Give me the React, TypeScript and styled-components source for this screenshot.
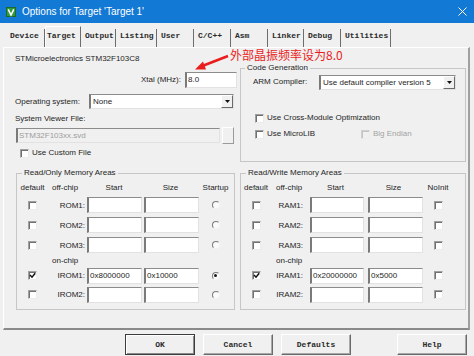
import React from "react";
import styled, { createGlobalStyle } from "styled-components";

const GlobalStyle = createGlobalStyle`
  html, body {
    margin: 0;
    padding: 0;
    background: #f0f0f0;
  }

  body {
    font-family: "Liberation Sans", Arial, sans-serif;
    font-size: 8px;
    color: #1e1e1e;
  }

  * {
    box-sizing: border-box;
  }
`;

const Dialog = styled.div`
  position: relative;
  width: 474px;
  height: 356px;
  overflow: hidden;

  display: flex;
  flex-direction: column;

  background: #f0f0f0;
`;

const TitleBar = styled.div`
  height: 23px;
  flex: none;

  display: flex;
  align-items: center;
  padding: 0 7px 0 6px;

  background: #1279d4;
  color: #fff;
`;

const Title = styled.span`
  margin-left: 6px;

  font-size: 10px;
  line-height: 12px;
`;

const CloseIcon = styled.svg`
  margin-left: auto;
`;

const TabBar = styled.div`
  height: 24px;
  flex: none;

  display: flex;
  align-items: flex-end;
  padding-left: 6px;

  font-family: "Liberation Mono", "Courier New", monospace;
  font-size: 8px;
  font-weight: bold;
  color: #2a2a2a;
`;

const Tab = styled.div<{ $w: number; $active?: boolean }>`
  width: ${({ $w }) => $w}px;
  height: ${({ $active }) => ($active ? 21 : 18)}px;
  padding: ${({ $active }) => ($active ? "3px 0 0 1px" : "1px 0 0 4px")};

  line-height: 12px;
  white-space: nowrap;

  border-top: ${({ $active }) => ($active ? "1px solid #fff" : "none")};
  border-left: ${({ $active }) => ($active ? "1px solid #fff" : "none")};
  border-right: 1px solid #6d6d6d;
`;

const Panel = styled.div`
  width: 467px;
  height: 283px;
  flex: none;
  margin-left: 3px;
  padding: 0 2px 0 11px;

  display: flex;
  flex-direction: column;

  border-top: 1px solid #fff;
  border-left: 1px solid #fff;
  border-right: 2px solid #a0a0a0;
  border-bottom: 2px solid #8a8a8a;
`;

const TopSection = styled.div`
  display: grid;
  grid-template-columns: 222px 226px;
  column-gap: 3px;
`;

const Column = styled.div`
  display: flex;
  flex-direction: column;
`;

const TextLine = styled.div<{ $top: number; $indent?: number }>`
  margin-top: ${({ $top }) => $top}px;
  padding-left: ${({ $indent }) => $indent ?? 0}px;

  line-height: 12px;
  white-space: nowrap;
`;

const Row = styled.div<{ $top: number; $h: number; $indent?: number; $end?: boolean }>`
  height: ${({ $h }) => $h}px;
  margin-top: ${({ $top }) => $top}px;
  padding-left: ${({ $indent }) => $indent ?? 0}px;

  display: flex;
  align-items: center;
  justify-content: ${({ $end }) => ($end ? "flex-end" : "flex-start")};

  white-space: nowrap;
`;

const Label = styled.span<{ $w?: number; $muted?: boolean }>`
  width: ${({ $w }) => ($w ? `${$w}px` : "auto")};
  flex: none;

  color: ${({ $muted }) => ($muted ? "#a3a3a3" : "inherit")};
  line-height: 12px;
`;

const Field = styled.div<{ $w: number; $h?: number; $disabled?: boolean; $gap?: number }>`
  width: ${({ $w }) => $w}px;
  height: ${({ $h }) => $h ?? 16}px;
  flex: none;
  margin-left: ${({ $gap }) => $gap ?? 0}px;
  padding-left: 1px;

  display: flex;
  align-items: center;

  background: ${({ $disabled }) => ($disabled ? "#f0f0f0" : "#fff")};
  color: ${({ $disabled }) => ($disabled ? "#9c9c9c" : "#1e1e1e")};

  border-top: 1px solid #8c8c8c;
  border-left: 2px solid #7a7a7a;
  border-right: 1px solid #e2e2e2;
  border-bottom: 1px solid #e2e2e2;

  line-height: 12px;
  white-space: nowrap;
  overflow: hidden;
`;

const Select = styled.div<{ $w: number; $gap?: number }>`
  width: ${({ $w }) => $w}px;
  height: 15px;
  flex: none;
  margin-left: ${({ $gap }) => $gap ?? 0}px;
  padding-left: 2px;

  display: flex;
  align-items: center;

  background: #fff;

  border-top: 1px solid #8c8c8c;
  border-left: 2px solid #7a7a7a;
  border-right: 1px solid #e2e2e2;
  border-bottom: 1px solid #e2e2e2;

  white-space: nowrap;
`;

const DropButton = styled.span`
  width: 12px;
  height: 100%;
  margin-left: auto;

  display: flex;
  align-items: center;
  justify-content: center;

  background: #f0f0f0;

  border-top: 1px solid #fff;
  border-left: 1px solid #fff;
  border-right: 1px solid #6a6a6a;
  border-bottom: 1px solid #6a6a6a;
`;

const BrowseButton = styled.span`
  width: 12px;
  height: 17px;
  flex: none;
  margin-left: 2px;

  background: #f0f0f0;

  border-top: 1px solid #fff;
  border-left: 1px solid #fff;
  border-right: 1px solid #9a9a9a;
  border-bottom: 1px solid #9a9a9a;
`;

const CheckBox = styled.span<{ $disabled?: boolean }>`
  width: 9px;
  height: 9px;
  flex: none;

  display: inline-flex;
  align-items: center;
  justify-content: center;

  background: ${({ $disabled }) => ($disabled ? "#f0f0f0" : "#fff")};

  border-top: 1px solid ${({ $disabled }) => ($disabled ? "#cfcfcf" : "#a0a0a0")};
  border-left: 1px solid ${({ $disabled }) => ($disabled ? "#cfcfcf" : "#a0a0a0")};
  border-right: 1px solid #ececec;
  border-bottom: 1px solid #ececec;
  box-shadow: inset 1px 1px 0 ${({ $disabled }) => ($disabled ? "#c4c4c4" : "#707070")};
`;

const Radio = styled.span`
  width: 8px;
  height: 8px;
  flex: none;

  display: inline-flex;
  align-items: center;
  justify-content: center;

  border-radius: 50%;
  border: 1px solid;
  border-color: #7a7a7a #f4f4f4 #f4f4f4 #7a7a7a;
  background: #fbfbfb;
`;

const RadioDot = styled.span`
  width: 3px;
  height: 3px;

  border-radius: 50%;
  background: #1a1a1a;
`;

const CheckText = styled.span<{ $muted?: boolean }>`
  margin-left: 3px;

  color: ${({ $muted }) => ($muted ? "#a3a3a3" : "inherit")};
  line-height: 12px;
`;

const Option = styled.span<{ $w?: number }>`
  width: ${({ $w }) => ($w ? `${$w}px` : "auto")};
  flex: none;

  display: flex;
  align-items: center;
`;

const Group = styled.fieldset<{ $w: number; $bottom: number; $top?: number }>`
  width: ${({ $w }) => $w}px;
  min-width: 0;
  margin: ${({ $top }) => $top ?? 0}px 0 0 0;
  padding: 0 0 ${({ $bottom }) => $bottom}px 0;

  border: 1px solid #c6c6c6;
`;

const Legend = styled.legend<{ $offset: number }>`
  margin-left: ${({ $offset }) => $offset}px;
  padding: 0 2px;

  font-size: 8px;
  line-height: 10px;
`;

const MemorySection = styled.div`
  margin-top: 6px;
  padding-left: 1px;

  display: flex;
  gap: 5px;
`;

const MemGrid = styled.div<{ $cols: string }>`
  margin-top: 1px;

  display: grid;
  grid-template-columns: ${({ $cols }) => $cols};
  grid-template-rows: 16px 20px 20px 20px 11px 19px 19px;
  align-items: center;

  white-space: nowrap;
`;

const Cell = styled.div<{ $justify?: string; $pl?: number; $pr?: number }>`
  display: flex;
  align-items: center;
  justify-content: ${({ $justify }) => $justify ?? "center"};
  padding-left: ${({ $pl }) => $pl ?? 0}px;
  padding-right: ${({ $pr }) => $pr ?? 0}px;

  line-height: 11px;
`;

const ButtonRow = styled.div`
  flex: none;
  padding: 4px 0 0 125px;

  display: flex;
  gap: 8px;
`;

const DialogButton = styled.button<{ $default?: boolean; $push?: number }>`
  width: 70px;
  height: 21px;
  margin: 0 0 0 ${({ $push }) => $push ?? 0}px;
  padding: 0;

  font-family: "Liberation Mono", "Courier New", monospace;
  font-size: 8px;
  font-weight: bold;
  color: #2a2a2a;

  background: #f0f0f0;

  border: 1px solid;
  border-color: ${({ $default }) =>
    $default ? "#3c3c3c" : "#fff #6a6a6a #6a6a6a #fff"};
  box-shadow: ${({ $default }) =>
    $default
      ? "inset 1px 1px 0 #fff, inset -1px -1px 0 #8a8a8a"
      : "inset -1px -1px 0 #a8a8a8"};
`;

const Annotation = styled.div`
  position: absolute;
  left: 186px;
  top: 46px;

  display: flex;
  align-items: flex-start;
  pointer-events: none;
`;

const AnnotationText = styled.span`
  margin: 2px 0 0 0;

  font-family: "Noto Sans CJK SC", "Liberation Sans", sans-serif;
  font-size: 12px;
  line-height: 14px;
  color: #ea1d1d;
  white-space: nowrap;
`;

type MemRow = {
  name: string;
  start: string;
  size: string;
  def: boolean;
  last: boolean;
};

const TABS = [
  { name: "Device", w: 39 },
  { name: "Target", w: 36, active: true },
  { name: "Output", w: 35 },
  { name: "Listing", w: 41 },
  { name: "User", w: 37 },
  { name: "C/C++", w: 37 },
  { name: "Asm", w: 37 },
  { name: "Linker", w: 36 },
  { name: "Debug", w: 37 },
  { name: "Utilities", w: 50 },
];

const ROM_OFF: MemRow[] = [
  { name: "ROM1:", start: "", size: "", def: false, last: false },
  { name: "ROM2:", start: "", size: "", def: false, last: false },
  { name: "ROM3:", start: "", size: "", def: false, last: false },
];

const ROM_ON: MemRow[] = [
  { name: "IROM1:", start: "0x8000000", size: "0x10000", def: true, last: true },
  { name: "IROM2:", start: "", size: "", def: false, last: false },
];

const RAM_OFF: MemRow[] = [
  { name: "RAM1:", start: "", size: "", def: false, last: false },
  { name: "RAM2:", start: "", size: "", def: false, last: false },
  { name: "RAM3:", start: "", size: "", def: false, last: false },
];

const RAM_ON: MemRow[] = [
  { name: "IRAM1:", start: "0x20000000", size: "0x5000", def: true, last: false },
  { name: "IRAM2:", start: "", size: "", def: false, last: false },
];

function Check({ checked, disabled }: { checked?: boolean; disabled?: boolean }) {
  return (
    <CheckBox $disabled={disabled}>
      {checked && (
        <svg width="7" height="7" viewBox="0 0 7 7">
          <path d="M1 3 L3 5.2 L6.2 1.2" stroke="#111" strokeWidth="1.5" fill="none" />
        </svg>
      )}
    </CheckBox>
  );
}

function DropArrow() {
  return (
    <DropButton>
      <svg width="5" height="3" viewBox="0 0 5 3">
        <polygon points="0,0 5,0 2.5,3" fill="#111" />
      </svg>
    </DropButton>
  );
}

type GroupProps = {
  title: string;
  width: number;
  cols: string;
  startW: number;
  sizeW: number;
  namePad: number;
  offPad: number;
  lastHeader: string;
  lastKind: "radio" | "check";
  off: MemRow[];
  on: MemRow[];
};

function MemoryGroup(props: GroupProps) {
  const { title, width, cols, startW, sizeW, namePad, offPad, lastHeader, lastKind, off, on } = props;

  const renderRow = (r: MemRow) => (
    <React.Fragment key={r.name}>
      <Cell>
        <Check checked={r.def} />
      </Cell>
      <Cell $justify="flex-end" $pr={namePad}>
        {r.name}
      </Cell>
      <Cell $justify="flex-end">
        <Field $w={startW}>{r.start}</Field>
      </Cell>
      <Cell $justify="flex-end">
        <Field $w={sizeW}>{r.size}</Field>
      </Cell>
      <Cell>
        {lastKind === "radio" ? <Radio>{r.last && <RadioDot />}</Radio> : <Check checked={r.last} />}
      </Cell>
    </React.Fragment>
  );

  return (
    <Group $w={width} $bottom={5}>
      <Legend $offset={5}>{title}</Legend>
      <MemGrid $cols={cols}>
        <Cell>default</Cell>
        <Cell $justify="flex-start" $pl={offPad}>
          off-chip
        </Cell>
        <Cell>Start</Cell>
        <Cell>Size</Cell>
        <Cell>{lastHeader}</Cell>
        {off.map(renderRow)}
        <Cell />
        <Cell $justify="flex-start" $pl={offPad}>
          on-chip
        </Cell>
        <Cell />
        <Cell />
        <Cell />
        {on.map(renderRow)}
      </MemGrid>
    </Group>
  );
}

export default function App() {
  return (
    <>
      <GlobalStyle />
      <Dialog>
        <TitleBar>
          <svg width="10" height="10" viewBox="0 0 10 10">
            <rect width="10" height="10" fill="#2f9a3e" />
            <rect x="0.5" y="0.5" width="9" height="9" fill="none" stroke="#1c6b2a" />
            <path d="M2.2 2.4 L5 8 L7.8 2.4" stroke="#fff" strokeWidth="1.6" fill="none" />
          </svg>
          <Title>Options for Target 'Target 1'</Title>
          <CloseIcon width="9" height="9" viewBox="0 0 9 9">
            <path d="M0.5 0.5 L8.5 8.5 M8.5 0.5 L0.5 8.5" stroke="#fff" strokeWidth="1" />
          </CloseIcon>
        </TitleBar>

        <TabBar>
          {TABS.map((t) => (
            <Tab key={t.name} $w={t.w} $active={t.active}>
              {t.name}
            </Tab>
          ))}
        </TabBar>

        <Panel>
          <TopSection>
            <Column>
              <TextLine $top={5}>STMicroelectronics STM32F103C8</TextLine>
              <Row $top={7} $h={16} $end>
                <Label>Xtal (MHz):</Label>
                <Field $w={52} $gap={4}>
                  8.0
                </Field>
              </Row>
              <Row $top={6} $h={15}>
                <Label $w={74}>Operating system:</Label>
                <Select $w={145}>
                  None
                  <DropArrow />
                </Select>
              </Row>
              <TextLine $top={4}>System Viewer File:</TextLine>
              <Row $top={2} $h={17} $indent={1}>
                <Field $w={204} $h={15} $disabled>
                  STM32F103xx.svd
                </Field>
                <BrowseButton />
              </Row>
              <Row $top={3} $h={12} $indent={5}>
                <Check />
                <CheckText>Use Custom File</CheckText>
              </Row>
            </Column>

            <Column>
              <Group $w={226} $bottom={21} $top={15}>
                <Legend $offset={4}>Code Generation</Legend>
                <Row $top={2} $h={14} $indent={12}>
                  <Label $w={66}>ARM Compiler:</Label>
                  <Select $w={137}>
                    Use default compiler version 5
                    <DropArrow />
                  </Select>
                </Row>
                <Row $top={23} $h={12} $indent={14}>
                  <Check />
                  <CheckText>Use Cross-Module Optimization</CheckText>
                </Row>
                <Row $top={4} $h={12} $indent={14}>
                  <Option $w={106}>
                    <Check />
                    <CheckText>Use MicroLIB</CheckText>
                  </Option>
                  <Option>
                    <Check disabled />
                    <CheckText $muted>Big Endian</CheckText>
                  </Option>
                </Row>
              </Group>
            </Column>
          </TopSection>

          <MemorySection>
            <MemoryGroup
              title="Read/Only Memory Areas"
              width={220}
              cols="31px 38px 56px 57px 33px"
              startW={55}
              sizeW={55}
              namePad={1}
              offPad={4}
              lastHeader="Startup"
              lastKind="radio"
              off={ROM_OFF}
              on={ROM_ON}
            />
            <MemoryGroup
              title="Read/Write Memory Areas"
              width={227}
              cols="30px 36px 57px 59px 30px"
              startW={54}
              sizeW={55}
              namePad={4}
              offPad={5}
              lastHeader="NoInit"
              lastKind="check"
              off={RAM_OFF}
              on={RAM_ON}
            />
          </MemorySection>
        </Panel>

        <ButtonRow>
          <DialogButton $default>OK</DialogButton>
          <DialogButton>Cancel</DialogButton>
          <DialogButton>Defaults</DialogButton>
          <DialogButton $push={38}>Help</DialogButton>
        </ButtonRow>

        <Annotation>
          <svg width="44" height="28" viewBox="0 0 44 28">
            <line x1="42" y1="10" x2="15" y2="20.5" stroke="#ea1d1d" strokeWidth="2.6" />
            <polygon points="9,23.5 17,15.5 20,23.5" fill="#ea1d1d" />
          </svg>
          <AnnotationText>外部晶振频率设为8.0</AnnotationText>
        </Annotation>
      </Dialog>
    </>
  );
}
